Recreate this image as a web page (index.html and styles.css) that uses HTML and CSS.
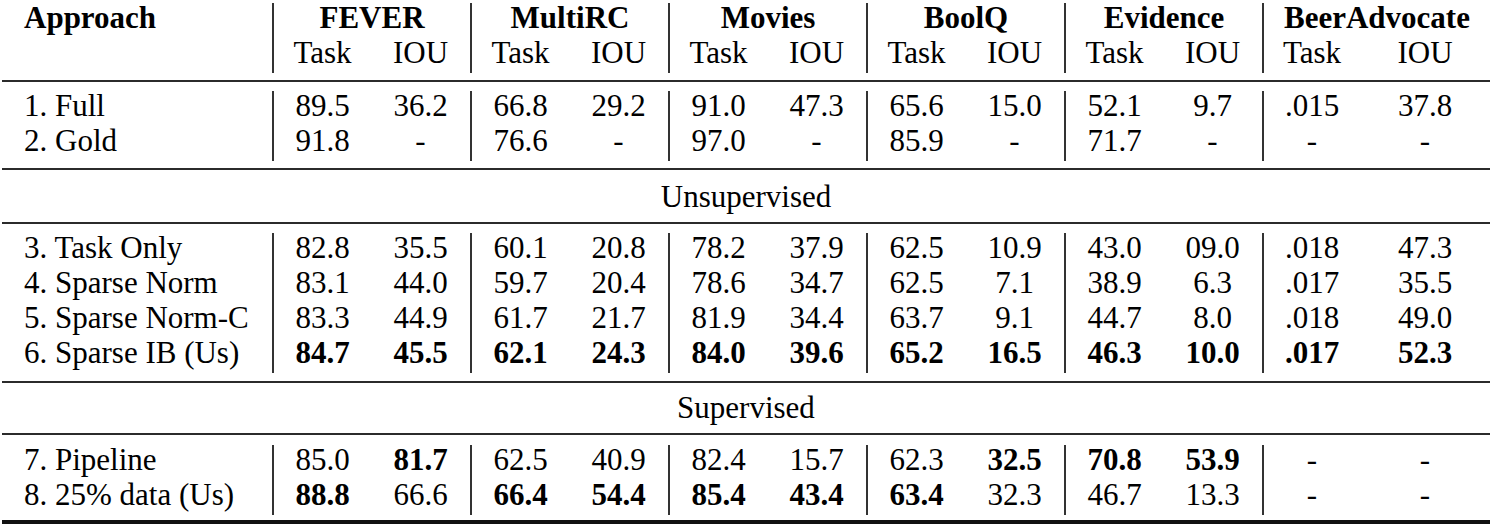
FILE: index.html
```html
<!DOCTYPE html>
<html lang="en">
<head>
    <meta charset="UTF-8">
    <meta name="viewport" content="width=device-width, initial-scale=1.0">
    <title>Results</title>
    <link rel="stylesheet" href="styles.css">
</head>
<body>
    <main class="results">
        <!-- header: dataset names and metric names -->
        <section class="block head">
            <div class="cell name b">Approach</div>
            <div class="cell wide sep b">FEVER</div>
            <div class="cell wide sep b">MultiRC</div>
            <div class="cell wide sep b">Movies</div>
            <div class="cell wide sep b">BoolQ</div>
            <div class="cell wide sep b">Evidence</div>
            <div class="cell wide sep b">BeerAdvocate</div>

            <div class="cell name"></div>
            <div class="cell sep">Task</div><div class="cell">IOU</div>
            <div class="cell sep">Task</div><div class="cell">IOU</div>
            <div class="cell sep">Task</div><div class="cell">IOU</div>
            <div class="cell sep">Task</div><div class="cell">IOU</div>
            <div class="cell sep">Task</div><div class="cell">IOU</div>
            <div class="cell sep">Task</div><div class="cell">IOU</div>
        </section>

        <!-- baselines -->
        <section class="block top">
            <div class="cell name">1. Full</div>
            <div class="cell sep">89.5</div><div class="cell">36.2</div>
            <div class="cell sep">66.8</div><div class="cell">29.2</div>
            <div class="cell sep">91.0</div><div class="cell">47.3</div>
            <div class="cell sep">65.6</div><div class="cell">15.0</div>
            <div class="cell sep">52.1</div><div class="cell">9.7</div>
            <div class="cell sep">.015</div><div class="cell">37.8</div>

            <div class="cell name">2. Gold</div>
            <div class="cell sep">91.8</div><div class="cell">-</div>
            <div class="cell sep">76.6</div><div class="cell">-</div>
            <div class="cell sep">97.0</div><div class="cell">-</div>
            <div class="cell sep">85.9</div><div class="cell">-</div>
            <div class="cell sep">71.7</div><div class="cell">-</div>
            <div class="cell sep">-</div><div class="cell">-</div>
        </section>

        <section class="block label first">
            <div class="cell full">Unsupervised</div>
        </section>

        <section class="block middle">
            <div class="cell name">3. Task Only</div>
            <div class="cell sep">82.8</div><div class="cell">35.5</div>
            <div class="cell sep">60.1</div><div class="cell">20.8</div>
            <div class="cell sep">78.2</div><div class="cell">37.9</div>
            <div class="cell sep">62.5</div><div class="cell">10.9</div>
            <div class="cell sep">43.0</div><div class="cell">09.0</div>
            <div class="cell sep">.018</div><div class="cell">47.3</div>

            <div class="cell name">4. Sparse Norm</div>
            <div class="cell sep">83.1</div><div class="cell">44.0</div>
            <div class="cell sep">59.7</div><div class="cell">20.4</div>
            <div class="cell sep">78.6</div><div class="cell">34.7</div>
            <div class="cell sep">62.5</div><div class="cell">7.1</div>
            <div class="cell sep">38.9</div><div class="cell">6.3</div>
            <div class="cell sep">.017</div><div class="cell">35.5</div>

            <div class="cell name">5. Sparse Norm-C</div>
            <div class="cell sep">83.3</div><div class="cell">44.9</div>
            <div class="cell sep">61.7</div><div class="cell">21.7</div>
            <div class="cell sep">81.9</div><div class="cell">34.4</div>
            <div class="cell sep">63.7</div><div class="cell">9.1</div>
            <div class="cell sep">44.7</div><div class="cell">8.0</div>
            <div class="cell sep">.018</div><div class="cell">49.0</div>

            <div class="cell name">6. Sparse IB (Us)</div>
            <div class="cell sep b">84.7</div><div class="cell b">45.5</div>
            <div class="cell sep b">62.1</div><div class="cell b">24.3</div>
            <div class="cell sep b">84.0</div><div class="cell b">39.6</div>
            <div class="cell sep b">65.2</div><div class="cell b">16.5</div>
            <div class="cell sep b">46.3</div><div class="cell b">10.0</div>
            <div class="cell sep b">.017</div><div class="cell b">52.3</div>
        </section>

        <section class="block label second">
            <div class="cell full">Supervised</div>
        </section>

        <section class="block bottom">
            <div class="cell name">7. Pipeline</div>
            <div class="cell sep">85.0</div><div class="cell b">81.7</div>
            <div class="cell sep">62.5</div><div class="cell">40.9</div>
            <div class="cell sep">82.4</div><div class="cell">15.7</div>
            <div class="cell sep">62.3</div><div class="cell b">32.5</div>
            <div class="cell sep b">70.8</div><div class="cell b">53.9</div>
            <div class="cell sep">-</div><div class="cell">-</div>

            <div class="cell name">8. 25% data (Us)</div>
            <div class="cell sep b">88.8</div><div class="cell">66.6</div>
            <div class="cell sep b">66.4</div><div class="cell b">54.4</div>
            <div class="cell sep b">85.4</div><div class="cell b">43.4</div>
            <div class="cell sep b">63.4</div><div class="cell">32.3</div>
            <div class="cell sep">46.7</div><div class="cell">13.3</div>
            <div class="cell sep">-</div><div class="cell">-</div>
        </section>
    </main>
</body>
</html>
```

FILE: styles.css
```css
/* plain white page, times-like type */
body {
    margin: 0;
    background-color: #fff;
    color: #000;
    font-family: "Liberation Serif", "Times New Roman", serif;
    font-size: 31px;
}

/* the whole table */
.results {
    width: 1488px;
    margin-left: 2px;
}

/* every block shares the same columns */
.block {
    display: grid;
    grid-template-columns: 270px repeat(10, 99px) 98px 130px;
    border-bottom: 2px solid #2b2b2b;
}

/* one cell, 35px tall with the baseline sitting high like a latex strut */
.cell {
    line-height: 29px;
    padding-bottom: 6px;
    text-align: center;
    white-space: nowrap;
}

.name {
    text-align: left;
    padding-left: 22px;
}

/* vertical rule in front of each dataset */
.sep {
    border-left: 2px solid #333;
}

.wide {
    grid-column: span 2;
}

.full {
    grid-column: 1 / -1;
}

.b {
    font-weight: bold;
}

/* spacing around the horizontal rules */
.head {
    padding: 3px 0 7px;
}

.top {
    padding: 9px 0 7px;
}

.label.first {
    padding: 12px 0 5px;
}

.middle {
    padding: 9px 0 8px;
}

.label.second {
    padding: 10px 0 5px;
}

.bottom {
    padding: 10px 0 5px;
    border-bottom: 4px solid #111;
}
```
